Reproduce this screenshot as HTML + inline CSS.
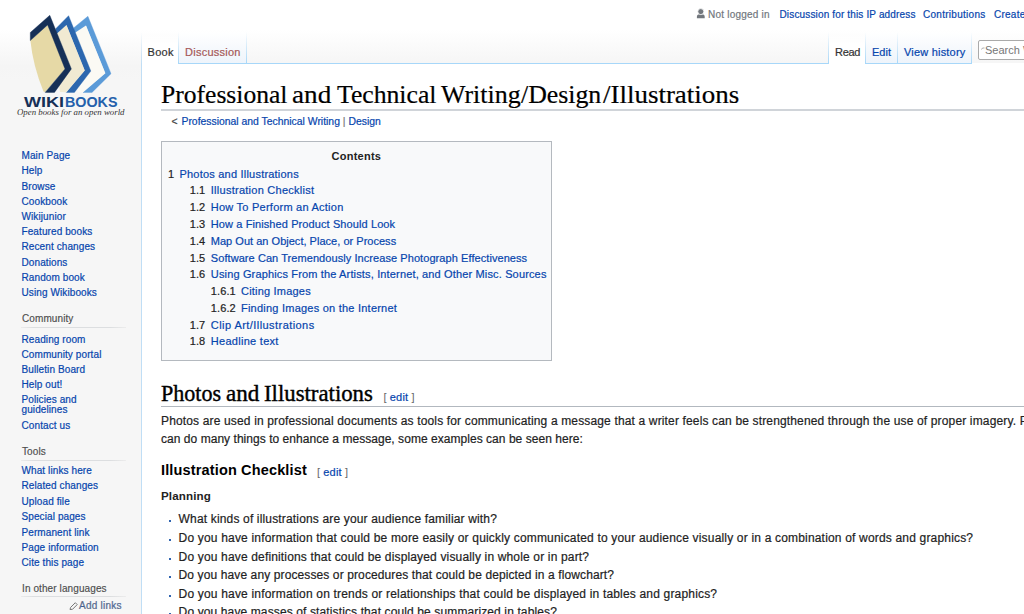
<!DOCTYPE html>
<html><head><meta charset="utf-8">
<style>
*{margin:0;padding:0;box-sizing:border-box}
html,body{width:1024px;height:614px;overflow:hidden}
body{font-family:"Liberation Sans",sans-serif;background:#f6f6f6;position:relative;color:#222}
a{color:#0645ad;text-decoration:none}
.abs{position:absolute;white-space:nowrap}
#pagebase{position:absolute;left:0;top:0;width:1024px;height:80px;background:linear-gradient(#fff 0px,#fff 30px,#f5f5f5 66px,#f6f6f6 80px)}
#content{position:absolute;left:141px;top:63px;width:883px;height:551px;background:#fff;border-left:1px solid #c0def5}
/* sidebar */
.side a{position:absolute;left:21.5px;-webkit-text-stroke:0.2px #0645ad;font-size:10px;letter-spacing:0.1px;white-space:nowrap;margin-top:1px}
.side .h{position:absolute;-webkit-text-stroke:0.15px #4d4d4d;left:22px;font-size:10px;letter-spacing:0.1px;margin-top:1px;color:#4d4d4d;white-space:nowrap}
.side .rule{position:absolute;left:21px;width:105px;height:1px;background:linear-gradient(to right,#ebebeb,#dcdee0 12%,#dcdee0 85%,#ececec)}
/* tabs */
.tab{position:absolute;top:32px;height:31px;background:linear-gradient(#fff,#eef4fb);font-size:11px}
.tab.sel{background:linear-gradient(rgba(255,255,255,0),#fff 40%)}
.sep{position:absolute;top:32px;width:1px;height:32px;background:linear-gradient(rgba(167,215,249,0),#a7d7f9)}
.tabline{position:absolute;top:63px;height:1px;background:#a7d7f9}
.tab span{position:absolute;top:14px;color:#0645ad;-webkit-text-stroke:0.2px currentColor}
.tab.nb{border-bottom:1px solid #a7d7f9;height:32px}

.toc div{position:absolute;left:0;margin-top:-1px;height:17px;white-space:nowrap;font-size:11px;letter-spacing:0.1px}
.toc .n{position:absolute;color:#222}
.toc a{position:absolute;-webkit-text-stroke:0.2px #0645ad}
.toc .n{-webkit-text-stroke:0.2px #222}
.edit{font-size:11px;color:#666;letter-spacing:0.2px}
.edit a{padding:0 3.2px 0 3px;-webkit-text-stroke:0.2px #0645ad}
.body{font-size:12px;letter-spacing:0.15px;color:#222;line-height:17.5px;-webkit-text-stroke:0.2px #222}
.ul div{position:absolute;-webkit-text-stroke:0.2px #222;margin-top:-2px;left:178.6px;font-size:12px;letter-spacing:0.16px;color:#222;white-space:nowrap}
.ul i{position:absolute;left:-9.6px;top:8.2px;width:2.2px;height:2.2px;background:#2f64b0}
.tw{position:absolute;top:80.5px;white-space:nowrap;font-family:'Liberation Serif',serif;font-size:24.5px;line-height:28px;color:#000;-webkit-text-stroke:0.2px #000;transform-origin:0 0}
.hw{position:absolute;top:380.6px;white-space:nowrap;font-family:'Liberation Serif',serif;font-size:22.5px;line-height:26px;color:#000;-webkit-text-stroke:0.4px #000;transform-origin:0 0}
</style></head>
<body>
<div id="pagebase"></div>
<div id="content"></div>

<!-- logo -->
<svg class="abs" style="left:0;top:0" width="141" height="130" viewBox="0 0 141 130">
 <g>
  <path d="M73.6,27.9 L87.9,16.3 L111,73.7 L92,92.4 L83,92.4 L105.2,73.3 L86,25.7 L74,36 Z" fill="#5b9bd8" stroke="#5b9bd8" stroke-width="0.4" stroke-linejoin="round"/>
  <path d="M70,36 L86,25.5 L105.4,73.3 L83,92.2 L78,92 Z" fill="#fbfaf4"/>
  <path d="M55.7,28.8 L68.6,15.7 L90.8,71.1 L74.4,92.4 L66.3,92.4 L84.6,70.6 L66.5,25.2 L56,35 Z" fill="#2c67ae" stroke="#2c67ae" stroke-width="0.4" stroke-linejoin="round"/>
  <path d="M52,38 L66.5,25 L84.8,70.6 L66.3,92.2 L60,92 Z" fill="#f1ead2"/>
  <path d="M30.3,40.1 L47.8,24.7 L65,68.9 L45.2,92.2 L43.5,91.5 Q33,66 30.3,40.1 Z" fill="#e6d9a6"/>
  <path d="M30.3,32.5 L49.8,15.3 L71.4,68.9 L54.5,92.4 L45.2,92.4 L65,68.9 L47.6,24.9 L30.3,40.6 Z" fill="#163057" stroke="#163057" stroke-width="0.4" stroke-linejoin="round"/>
 </g>
 <text x="24" y="106.6" font-family="Liberation Sans" font-weight="bold" font-size="14.8" fill="#163057" textLength="40" lengthAdjust="spacingAndGlyphs">WIKI</text>
 <text x="65" y="106.6" font-family="Liberation Sans" font-weight="bold" font-size="14.8" fill="#2460ab" textLength="52.5" lengthAdjust="spacingAndGlyphs">BOOKS</text>
 <text x="17" y="115.3" font-family="Liberation Serif" font-style="italic" font-size="9" fill="#333" textLength="107.5" lengthAdjust="spacingAndGlyphs">Open books for an open world</text>
</svg>

<!-- sidebar -->
<div class="side">
 <a style="top:149px">Main Page</a>
 <a style="top:164px">Help</a>
 <a style="top:180px">Browse</a>
 <a style="top:195px">Cookbook</a>
 <a style="top:210px">Wikijunior</a>
 <a style="top:225px">Featured books</a>
 <a style="top:240px">Recent changes</a>
 <a style="top:256px">Donations</a>
 <a style="top:271px">Random book</a>
 <a style="top:286px">Using Wikibooks</a>
 <div class="h" style="top:312px">Community</div>
 <div class="rule" style="top:327px"></div>
 <a style="top:332.5px">Reading room</a>
 <a style="top:347.5px">Community portal</a>
 <a style="top:362.7px">Bulletin Board</a>
 <a style="top:377.8px">Help out!</a>
 <a style="top:394.1px;line-height:10.2px">Policies and<br>guidelines</a>
 <a style="top:419px">Contact us</a>
 <div class="h" style="top:445px">Tools</div>
 <div class="rule" style="top:460px"></div>
 <a style="top:464px">What links here</a>
 <a style="top:479px">Related changes</a>
 <a style="top:494.5px">Upload file</a>
 <a style="top:510px">Special pages</a>
 <a style="top:525.5px">Permanent link</a>
 <a style="top:540.5px">Page information</a>
 <a style="top:555.9px">Cite this page</a>
 <div class="h" style="top:582px">In other languages</div>
 <div class="rule" style="top:596px"></div>
 <svg style="position:absolute;left:69px;top:602px" width="9" height="8" viewBox="0 0 9 8"><path d="M1,7.5 L1.6,5.4 L6.3,0.7 L8.2,2.6 L3.5,7.3 Z" fill="none" stroke="#777" stroke-width="1"/></svg><a style="top:599px;left:79px;color:#72777d;letter-spacing:0.25px">Add links</a>
</div>

<!-- personal tools -->
<svg class="abs" style="left:696px;top:6.5px" width="10" height="12" viewBox="0 0 10 12"><path d="M0.9,11.3 L0.9,9.8 Q0.9,7.3 3.4,7.3 L6.2,7.3 Q8.7,7.3 8.7,9.8 L8.7,11.3 Z" fill="#72777d"/><circle cx="4.8" cy="4.6" r="3" fill="#72777d" stroke="#fff" stroke-width="0.8"/></svg>
<div class="abs" style="-webkit-text-stroke:0.2px #72777d;top:8.7px;left:708px;font-size:10px;letter-spacing:0.22px;color:#72777d">Not logged in</div>
<a class="abs" style="-webkit-text-stroke:0.2px #0645ad;top:8.7px;left:779.5px;font-size:10px;letter-spacing:0.15px">Discussion for this IP address</a>
<a class="abs" style="-webkit-text-stroke:0.2px #0645ad;top:8.7px;left:923px;font-size:10px;letter-spacing:0.28px">Contributions</a>
<a class="abs" style="-webkit-text-stroke:0.2px #0645ad;top:8.7px;left:994px;font-size:10px;letter-spacing:0.25px">Create account</a>

<!-- tabs -->
<div class="sep" style="left:141px;background:linear-gradient(rgba(192,222,245,0),#c0def5)"></div>
<div class="tab sel" style="left:142px;width:36px"><span style="left:5.5px;color:#333;letter-spacing:0.3px">Book</span></div>
<div class="sep" style="left:178px"></div>
<div class="tab nb" style="left:179px;width:67px"><span style="left:6px;color:#a55858;letter-spacing:0.25px">Discussion</span></div>
<div class="sep" style="left:246px"></div>
<div class="tabline" style="left:247px;width:581px"></div>

<div class="sep" style="left:828px"></div>
<div class="tab sel" style="left:829px;width:36px"><span style="left:6px;color:#333;letter-spacing:-0.3px">Read</span></div>
<div class="sep" style="left:865px"></div>
<div class="tab nb" style="left:866px;width:31px"><span style="left:6px">Edit</span></div>
<div class="sep" style="left:897px"></div>
<div class="tab nb" style="left:898px;width:73px"><span style="left:6px;color:#0645ad;letter-spacing:0.2px">View history</span></div>
<div class="sep" style="left:971px"></div>
<div class="abs" style="left:978px;top:40px;width:60px;height:20px;border:1px solid #aaa;border-radius:2px;background:#fff;font-size:11px;color:#777;padding:3px 0 0 6px">Search Wikibooks</div>
<svg class="abs" style="left:981px;top:47px" width="4" height="4" viewBox="0 0 4 4"><path d="M0.5,2.5 L1.5,1 L3.5,1" fill="none" stroke="#999" stroke-width="0.8"/></svg>


<!-- main content -->
<div id="title"><span class="tw" style="left:161.3px;transform:scaleX(1.044)">Professional</span><span class="tw" style="left:292.0px;transform:scaleX(1.109)">and</span><span class="tw" style="left:336.7px;transform:scaleX(1.048)">Technical</span><span class="tw" style="left:441.0px;transform:scaleX(1.059)">Writing</span><span class="tw" style="left:521.1px;transform:scaleX(1.053)">/Design</span><span class="tw" style="left:603.0px;transform:scaleX(1.1)">/Illustrations</span></div>
<div class="abs" style="left:161px;top:109px;width:863px;height:2px;background:#d0d4d9"></div>
<div class="abs" style="left:171.5px;top:115.5px;font-size:10.4px;color:#444;-webkit-text-stroke:0.2px currentColor">&lt; <a style="margin-left:1px">Professional and Technical Writing</a> <span style="color:#777">|</span> <a>Design</a></div>

<div class="abs" id="toc" style="left:161px;top:141px;width:391px;height:220px;background:#f8f9fa;border:1px solid #b4b9bf"></div>
<div class="abs" style="left:331.5px;top:150px;font-size:11px;letter-spacing:0.25px;font-weight:bold;color:#222">Contents</div>
<div class="toc">
 <div style="top:169px"><span class="n" style="left:168px">1</span><a style="left:179.5px;letter-spacing:0.21px">Photos and Illustrations</a></div>
 <div style="top:185px"><span class="n" style="left:189.7px">1.1</span><a style="left:210.8px;letter-spacing:0.26px">Illustration Checklist</a></div>
 <div style="top:202px"><span class="n" style="left:189.7px">1.2</span><a style="left:210.8px;letter-spacing:0.24px">How To Perform an Action</a></div>
 <div style="top:219px"><span class="n" style="left:189.7px">1.3</span><a style="left:210.8px;letter-spacing:0.1px">How a Finished Product Should Look</a></div>
 <div style="top:236px"><span class="n" style="left:189.7px">1.4</span><a style="left:210.8px;letter-spacing:0.02px">Map Out an Object, Place, or Process</a></div>
 <div style="top:253px"><span class="n" style="left:189.7px">1.5</span><a style="left:210.8px;letter-spacing:0.07px">Software Can Tremendously Increase Photograph Effectiveness</a></div>
 <div style="top:269px"><span class="n" style="left:189.7px">1.6</span><a style="left:210.8px;letter-spacing:0.15px">Using Graphics From the Artists, Internet, and Other Misc. Sources</a></div>
 <div style="top:286px"><span class="n" style="left:210.8px">1.6.1</span><a style="left:241px;letter-spacing:0.2px">Citing Images</a></div>
 <div style="top:303px"><span class="n" style="left:210.8px">1.6.2</span><a style="left:241px;letter-spacing:0.23px">Finding Images on the Internet</a></div>
 <div style="top:320px"><span class="n" style="left:189.7px">1.7</span><a style="left:210.8px;letter-spacing:0.44px">Clip Art/Illustrations</a></div>
 <div style="top:336px"><span class="n" style="left:189.7px">1.8</span><a style="left:210.8px;letter-spacing:0.28px">Headline text</a></div>
</div>

<div id="h2"><span class="hw" style="left:161.2px;transform:scaleX(0.98)">Photos</span><span class="hw" style="left:226.0px;transform:scaleX(1.025)">and</span><span class="hw" style="left:263.8px;transform:scaleX(1.013)">Illustrations</span></div>
<div class="abs edit" style="left:383.5px;top:391px">[<a>edit</a>]</div>
<div class="abs" style="left:161px;top:406px;width:863px;height:1px;background:#b2b8bf"></div>

<div class="abs body" style="left:161px;top:413px">Photos are used in professional documents as tools for communicating a message that a writer feels can be strengthened through the use of proper imagery. Photos</div>
<div class="abs body" style="left:161px;top:430.5px;letter-spacing:0.04px">can do many things to enhance a message, some examples can be seen here:</div>

<div class="abs" style="left:161px;top:462px;font-size:14.5px;font-weight:bold;letter-spacing:0.15px;color:#000">Illustration Checklist</div>
<div class="abs edit" style="left:317px;top:465.5px">[<a>edit</a>]</div>
<div class="abs" style="left:161px;top:489px;font-size:11.6px;letter-spacing:0.12px;font-weight:bold;color:#222">Planning</div>

<div class="ul">
 <div style="top:514px"><i></i>What kinds of illustrations are your audience familiar with?</div>
 <div style="top:533px;letter-spacing:0.18px"><i></i>Do you have information that could be more easily or quickly communicated to your audience visually or in a combination of words and graphics?</div>
 <div style="top:552px"><i></i>Do you have definitions that could be displayed visually in whole or in part?</div>
 <div style="top:570px;letter-spacing:0.11px"><i></i>Do you have any processes or procedures that could be depicted in a flowchart?</div>
 <div style="top:589px;letter-spacing:0.18px"><i></i>Do you have information on trends or relationships that could be displayed in tables and graphics?</div>
 <div style="top:607px;letter-spacing:0.12px"><i></i>Do you have masses of statistics that could be summarized in tables?</div>
</div>
</body></html>
